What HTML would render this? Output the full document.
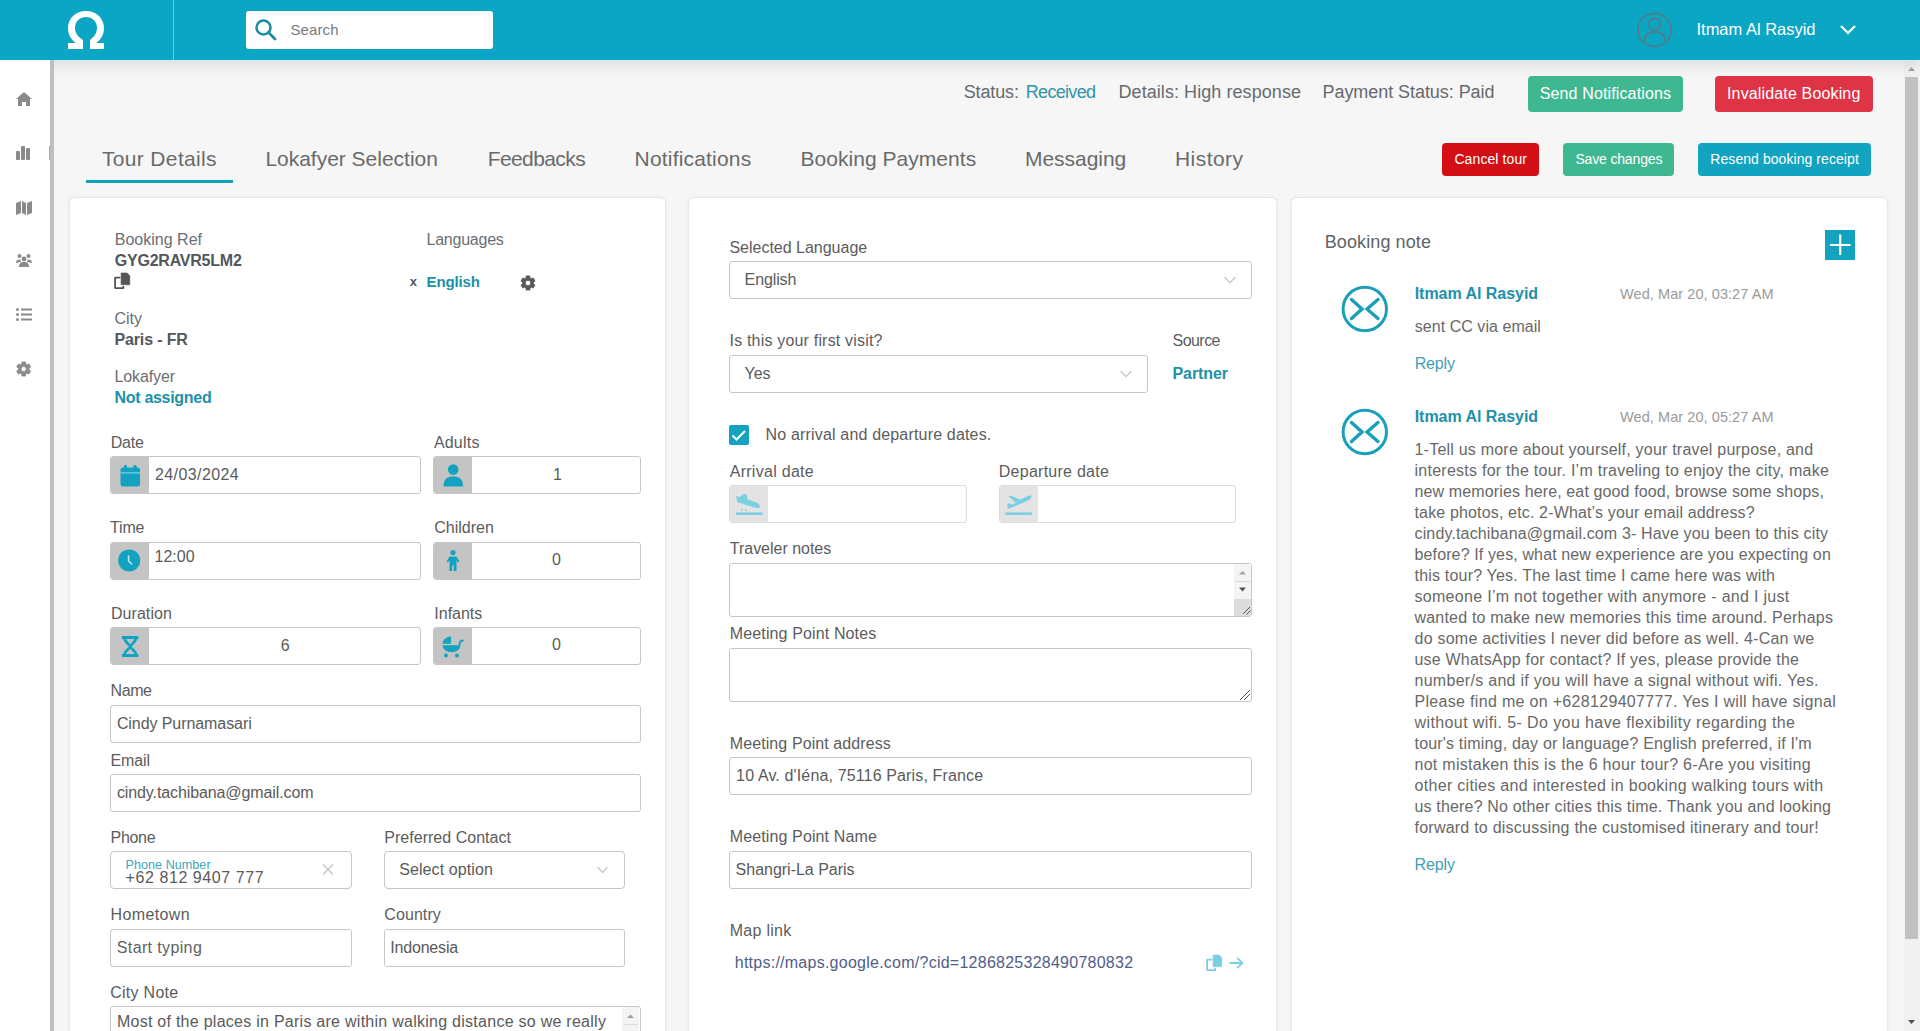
<!DOCTYPE html>
<html><head><meta charset="utf-8"><title>Booking</title>
<style>
*{box-sizing:border-box;margin:0;padding:0}
html,body{width:1920px;height:1031px;overflow:hidden}
body{font-family:"Liberation Sans",sans-serif;background:#f6f6f6;color:#555;position:relative}
.t{position:absolute;z-index:10;white-space:nowrap;font-family:"Liberation Sans",sans-serif}
.b{position:absolute}
svg{position:absolute;overflow:visible}
#hdr{left:0;top:0;width:1920px;height:60px;background:#0ba6c3;box-shadow:0 1px 0 #d2eff6,0 4px 14px rgba(0,0,0,.12);z-index:2}
.card{position:absolute;background:#fff;border:1px solid #e7e7e7;border-radius:6px;box-shadow:0 0 4px rgba(0,0,0,.05)}
.inp{position:absolute;background:#fff;border:1px solid #c6c6c6;border-radius:3px;overflow:hidden}
.addon{position:absolute;left:0;top:0;bottom:0;width:38px;background:#c4c4c4}
.btn{position:absolute;border-radius:4px}

</style></head><body>
<div class="b" id="hdr"></div>
<!-- omega logo -->
<svg style="left:0;top:0;z-index:3" width="200" height="60">
<path fill="#fff" d="M68,49 L68,43 L76,43 C70,39 68,33 68,28 C68,18 76,11 86,11 C96,11 104,18 104,28 C104,33 102,39 96,43 L104,43 L104,49 L90,49 L90,40 C94,37 97,33 97,28 C97,21 92,17 86,17 C80,17 75,21 75,28 C75,33 78,37 83,40 L83,49 Z"/>
<rect x="173" y="0" width="1" height="60" fill="#62d2ea"/>
</svg>
<!-- search -->
<div class="b" style="left:246px;top:11px;width:247px;height:38px;background:#fff;border-radius:3px;z-index:3"></div>
<svg style="left:0;top:0;z-index:4" width="300" height="60">
<circle cx="263.5" cy="27.5" r="7" fill="none" stroke="#1d8da5" stroke-width="2.6"/>
<line x1="268.6" y1="32.6" x2="275" y2="39" stroke="#1d8da5" stroke-width="2.8" stroke-linecap="round"/>
</svg>
<!-- user -->
<svg style="left:1600px;top:0;z-index:4" width="300" height="60">
<circle cx="54.6" cy="30" r="16.6" fill="none" stroke="#4f7e89" stroke-width="1.7"/>
<circle cx="54.8" cy="24.2" r="6" fill="none" stroke="#4f7e89" stroke-width="1.7"/>
<path d="M43.5,42.5 C44.5,35 49,31.8 54.8,31.8 C60.6,31.8 65,35 66,42.5" fill="none" stroke="#4f7e89" stroke-width="1.7"/>
<polyline points="241,26 248,33 255,26" fill="none" stroke="#fff" stroke-width="2.2"/>
</svg>
<!-- sidebar -->
<div class="b" style="left:0;top:60px;width:50px;height:971px;background:#fff;z-index:3"></div>
<div class="b" style="left:50px;top:60px;width:4px;height:971px;background:#bfbfbf;z-index:3"></div>
<div class="b" style="left:49px;top:146px;width:1px;height:14px;background:#b8a58a;z-index:4"></div>
<svg style="left:0;top:0;z-index:4" width="50" height="400" fill="#8a8a8a">
<!-- home -->
<path d="M24,92 L16,99 L18,99 L18,106 L22,106 L22,102 L26,102 L26,106 L30,106 L30,99 L32,99 Z"/>
<!-- chart -->
<rect x="16" y="151" width="4" height="9" rx="1"/><rect x="21" y="146" width="4" height="14" rx="1"/><rect x="26" y="148" width="4" height="12" rx="1"/>
<!-- map -->
<path d="M16,203 L21,201 L21,213 L16,215 Z M22,201 L26,203 L26,215 L22,213 Z M27,203 L32,201 L32,213 L27,215 Z"/>
<!-- users -->
<circle cx="19.5" cy="256" r="2"/><circle cx="28.5" cy="256" r="2"/><circle cx="24" cy="259" r="2.4"/>
<path d="M16,263 C16,260 18,259 20,259.5 L21,262 Z M32,263 C32,260 30,259 28,259.5 L27,262 Z"/>
<path d="M19,267 C19,263 21,262 24,262 C27,262 29,263 29,267 Z"/>
<!-- list -->
<circle cx="17.5" cy="309.5" r="1.5"/><circle cx="17.5" cy="314.5" r="1.5"/><circle cx="17.5" cy="319.5" r="1.5"/>
<rect x="21" y="308.5" width="11" height="2"/><rect x="21" y="313.5" width="11" height="2"/><rect x="21" y="318.5" width="11" height="2"/>
</svg>
<svg style="left:16px;top:361px;z-index:4" width="16" height="16" viewBox="0 0 16 16"><path fill="#8a8a8a" stroke="#8a8a8a" stroke-width="0.8" stroke-linejoin="round" fill-rule="evenodd" d="M5.05,3.41 L5.71,3.09 L5.93,0.92 L9.47,0.92 L9.69,3.09 L10.35,3.41 L10.96,3.82 L12.95,2.93 L14.72,5.99 L12.95,7.26 L13.00,8.00 L12.95,8.74 L14.72,10.01 L12.95,13.07 L10.96,12.18 L10.35,12.59 L9.69,12.91 L9.47,15.08 L5.93,15.08 L5.71,12.91 L5.05,12.59 L4.44,12.18 L2.45,13.07 L0.68,10.01 L2.45,8.74 L2.40,8.00 L2.45,7.26 L0.68,5.99 L2.45,2.93 L4.44,3.82 Z M10.30,8.00 A2.6,2.6 0 1 0 5.10,8.00 A2.6,2.6 0 1 0 10.30,8.00 Z"/></svg>
<!-- scrollbar -->
<div class="b" style="left:1904px;top:60px;width:16px;height:971px;background:#f1f1f1"></div>
<div class="b" style="left:1905px;top:77px;width:13px;height:862px;background:#c1c1c1"></div>
<svg style="left:1904px;top:60px" width="16" height="971">
<polygon points="4,11 11,11 7.5,7" fill="#a3a3a3"/>
<polygon points="4,960 11,960 7.5,964" fill="#505050"/>
</svg>
<!-- buttons -->
<div class="btn" style="left:1528px;top:76px;width:155px;height:36px;background:#3fb891"></div>
<div class="btn" style="left:1715px;top:76px;width:158px;height:36px;background:#df3346"></div>
<div class="btn" style="left:1442px;top:143px;width:97px;height:33px;background:#d30f15"></div>
<div class="btn" style="left:1563px;top:143px;width:111px;height:33px;background:#3fb891"></div>
<div class="btn" style="left:1698px;top:143px;width:173px;height:33px;background:#12a3c1"></div>
<!-- tab underline -->
<div class="b" style="left:86px;top:180px;width:147px;height:2.5px;background:#13a0bd"></div>
<!-- cards -->
<div class="card" style="left:69px;top:197px;width:597px;height:900px"></div>
<div class="card" style="left:688px;top:197px;width:589px;height:900px"></div>
<div class="card" style="left:1291px;top:197px;width:597px;height:900px"></div>
<!-- ===== card1 ===== -->
<!-- copy icon -->
<svg style="left:114px;top:273px" width="17" height="17" viewBox="0 0 17 17"><path d="M5.6,4.7 H1.1 V15.1 H9.3 V13.6" fill="none" stroke="#555" stroke-width="1.8" stroke-linejoin="round" stroke-linecap="round"/><path d="M7.1,0 H13.1 L15.8,2.7 V11.7 H7.1 Z" fill="#555" stroke="#555" stroke-width="0.6" stroke-linejoin="round"/></svg>
<!-- gear -->
<svg style="left:520px;top:275px" width="16" height="16" viewBox="0 0 16 16"><path fill="#585858" stroke="#585858" stroke-width="0.8" stroke-linejoin="round" fill-rule="evenodd" d="M5.30,3.32 L5.98,2.99 L6.23,0.92 L9.77,0.92 L10.02,2.99 L10.70,3.32 L11.32,3.74 L13.25,2.93 L15.02,5.99 L13.35,7.25 L13.40,8.00 L13.35,8.75 L15.02,10.01 L13.25,13.07 L11.32,12.26 L10.70,12.68 L10.02,13.01 L9.77,15.08 L6.23,15.08 L5.98,13.01 L5.30,12.68 L4.68,12.26 L2.75,13.07 L0.98,10.01 L2.65,8.75 L2.60,8.00 L2.65,7.25 L0.98,5.99 L2.75,2.93 L4.68,3.74 Z M10.70,8.00 A2.7,2.7 0 1 0 5.30,8.00 A2.7,2.7 0 1 0 10.70,8.00 Z"/></svg>
<!-- Date -->
<div class="inp" style="left:110px;top:456px;width:311px;height:38px"><div class="addon"></div></div>
<svg style="left:120px;top:465px" width="21" height="22" viewBox="0 0 21 22">
<rect x="0.5" y="2.5" width="19.5" height="19" rx="2.5" fill="#13a3c0"/>
<rect x="4" y="0" width="3" height="5" rx="1.2" fill="#13a3c0"/><rect x="13.5" y="0" width="3" height="5" rx="1.2" fill="#13a3c0"/>
<rect x="0.5" y="7.3" width="19.5" height="1.2" fill="#7fd3e3"/>
</svg>
<!-- Adults -->
<div class="inp" style="left:433px;top:456px;width:208px;height:38px"><div class="addon"></div></div>
<svg style="left:443px;top:464px" width="21" height="23" viewBox="0 0 21 23">
<circle cx="10.2" cy="5.6" r="5.3" fill="#13a3c0"/>
<path d="M0.5,22.5 C0.5,15 4,12.5 10.2,12.5 C16.5,12.5 20,15 20,22.5 Z" fill="#13a3c0"/>
</svg>
<!-- Time -->
<div class="inp" style="left:110px;top:542px;width:311px;height:38px"><div class="addon"></div></div>
<svg style="left:118px;top:549px" width="23" height="23" viewBox="0 0 23 23">
<circle cx="11.2" cy="11.4" r="11" fill="#13a3c0"/>
<path d="M10.6,7 V12 L13.6,15" fill="none" stroke="#bfe9f1" stroke-width="1.6" stroke-linecap="round"/>
</svg>
<!-- Children -->
<div class="inp" style="left:433px;top:542px;width:208px;height:38px"><div class="addon"></div></div>
<svg style="left:446px;top:549.5px" width="15" height="22" viewBox="0 0 15 22">
<circle cx="7" cy="2.6" r="2.6" fill="#13a3c0"/>
<path d="M3.5,6.5 H10.5 L13.5,11.5 L12,12.5 L10.5,10 V21 H7.8 V15.5 H6.2 V21 H3.5 V10 L2,12.5 L0.5,11.5 Z" fill="#13a3c0"/>
</svg>
<!-- Duration -->
<div class="inp" style="left:110px;top:627px;width:311px;height:38px"><div class="addon"></div></div>
<svg style="left:121.5px;top:636px" width="17" height="21" viewBox="0 0 17 21"><rect x="0" y="0" width="16.5" height="3" fill="#13a3c0"/><rect x="0" y="18" width="16.5" height="3" fill="#13a3c0"/><path d="M2.6,2 C2.6,7 8.2,8.3 8.2,10.5 C8.2,12.7 2.6,14 2.6,19 M13.9,2 C13.9,7 8.3,8.3 8.3,10.5 C8.3,12.7 13.9,14 13.9,19" fill="none" stroke="#13a3c0" stroke-width="2.8"/></svg>
<!-- Infants -->
<div class="inp" style="left:433px;top:627px;width:208px;height:38px"><div class="addon"></div></div>
<svg style="left:442px;top:636px" width="22" height="22" viewBox="0 0 22 22">
<path d="M0.5,9.2 A9,7 0 0 0 18.5,9.2 Z" fill="#13a3c0"/>
<path d="M0.5,7.8 A9,7.5 0 0 1 9,0.3 V7.8 Z" fill="#13a3c0"/>
<path d="M17.5,9 C17.5,6 18.5,4.5 21,4.5" fill="none" stroke="#13a3c0" stroke-width="1.8" stroke-linecap="round"/>
<circle cx="4" cy="19.5" r="2" fill="#13a3c0"/><circle cx="15" cy="19.5" r="2" fill="#13a3c0"/>
</svg>
<!-- Name / Email -->
<div class="inp" style="left:110px;top:705px;width:531px;height:38px"></div>
<div class="inp" style="left:110px;top:774px;width:531px;height:38px"></div>
<!-- Phone -->
<div class="inp" style="left:110px;top:851px;width:242px;height:38px;border-radius:4px"></div>
<svg style="left:322px;top:864px" width="12" height="11" viewBox="0 0 12 11">
<path d="M1,0.5 L11,10.5 M11,0.5 L1,10.5" stroke="#c9c9c9" stroke-width="1.6"/>
</svg>
<div class="inp" style="left:384px;top:851px;width:241px;height:38px;border-radius:4px"></div>
<svg style="left:597px;top:866px" width="11" height="8" viewBox="0 0 11 8">
<polyline points="0.5,1 5.5,6.5 10.5,1" fill="none" stroke="#c8c8c8" stroke-width="1.3"/>
</svg>
<div class="inp" style="left:110px;top:929px;width:242px;height:38px"></div>
<div class="inp" style="left:384px;top:929px;width:241px;height:38px"></div>
<!-- City note -->
<div class="inp" style="left:110px;top:1006px;width:531px;height:60px"></div>
<div class="b" style="left:622px;top:1007px;width:17px;height:30px;background:#f4f4f4"></div>
<svg style="left:622px;top:1007px" width="17" height="24">
<polygon points="5,11 12,11 8.5,7.5" fill="#a0a0a0"/>
<line x1="1" y1="17.5" x2="16" y2="17.5" stroke="#dedede" stroke-width="1"/>
</svg>
<!-- ===== card2 ===== -->
<div class="inp" style="left:729px;top:261px;width:523px;height:38px"></div>
<svg style="left:1224px;top:276px" width="12" height="8" viewBox="0 0 12 8">
<polyline points="0.5,1 6,6.5 11.5,1" fill="none" stroke="#c8c8c8" stroke-width="1.3"/>
</svg>
<div class="inp" style="left:729px;top:355px;width:419px;height:38px"></div>
<svg style="left:1120px;top:370px" width="12" height="8" viewBox="0 0 12 8">
<polyline points="0.5,1 6,6.5 11.5,1" fill="none" stroke="#c8c8c8" stroke-width="1.3"/>
</svg>
<div class="b" style="left:729px;top:425px;width:20px;height:20px;background:#13a3c0;border-radius:2px"></div>
<svg style="left:729px;top:425px" width="20" height="20">
<polyline points="3.5,10.5 7.5,14.5 16,6" fill="none" stroke="#fff" stroke-width="2"/>
</svg>
<!-- arrival / departure -->
<div class="inp" style="left:729px;top:485px;width:238px;height:38px;border-color:#dcdcdc"><div class="addon" style="background:#e3e3e3"></div></div>
<div class="inp" style="left:999px;top:485px;width:237px;height:38px;border-color:#dcdcdc"><div class="addon" style="background:#e3e3e3"></div></div>
<svg style="left:730px;top:486px" width="36" height="36" viewBox="0 0 36 36"><path d="M6,10 L9.5,11 L13.8,8 L16.8,8.6 L17.6,13.3 L26.5,16.6 C29.6,17.8 30.6,20.3 29.6,21.6 C28.8,22.6 26.8,22.3 24.5,21.6 L7.5,16.2 Z" fill="#7ccfe0"/><rect x="6" y="26.4" width="26.5" height="2.6" fill="#7ccfe0"/><circle cx="12" cy="23.6" r="0.9" fill="#7ccfe0"/><circle cx="15.8" cy="24" r="0.9" fill="#7ccfe0"/></svg>
<svg style="left:1000px;top:486px" width="36" height="36" viewBox="0 0 36 36"><path d="M7.3,18 L9,17.2 L12.5,18.6 L15.8,16.8 L8.5,10.3 L11.2,9.8 L20.3,13.6 L26.8,10.5 C29.8,9.2 31.8,9.3 31.6,10.6 C31.3,12.3 29.3,13.8 27,15 L9.3,22.6 C8.3,23 7.6,22.4 7.5,21.5 Z" fill="#7ccfe0"/><rect x="5.4" y="26.4" width="26.4" height="2.6" fill="#7ccfe0"/></svg>
<!-- textareas -->
<div class="inp" style="left:729px;top:563px;width:523px;height:54px"></div>
<div class="b" style="left:1234px;top:564px;width:17px;height:52px;background:#f4f4f4"></div>
<div class="b" style="left:1234px;top:599px;width:17px;height:17px;background:#dcdcdc"></div>
<svg style="left:1234px;top:564px" width="17" height="52">
<polygon points="5,10.5 12,10.5 8.5,7" fill="#a0a0a0"/>
<line x1="1" y1="17.5" x2="16" y2="17.5" stroke="#d8d8d8" stroke-width="1"/>
<polygon points="5,23.5 12,23.5 8.5,27.5" fill="#505050"/>
<path d="M9,50 L16,43 M12.5,50.5 L16.5,46.5" stroke="#555" stroke-width="1"/>
</svg>
<div class="inp" style="left:729px;top:648px;width:523px;height:54px"></div>
<svg style="left:1238px;top:688px" width="13" height="13">
<path d="M2,12 L12,2 M6,12 L12,6" stroke="#555" stroke-width="1"/>
</svg>
<div class="inp" style="left:729px;top:757px;width:523px;height:38px"></div>
<div class="inp" style="left:729px;top:851px;width:523px;height:38px"></div>
<!-- map link icons -->
<svg style="left:1206px;top:955px" width="17" height="17" viewBox="0 0 17 17"><path d="M5.6,4.7 H1.1 V15.1 H9.3 V13.6" fill="none" stroke="#7ccfe0" stroke-width="1.8" stroke-linejoin="round" stroke-linecap="round"/><path d="M7.1,0 H13.1 L15.8,2.7 V11.7 H7.1 Z" fill="#7ccfe0" stroke="#7ccfe0" stroke-width="0.6" stroke-linejoin="round"/></svg>
<svg style="left:1229px;top:957px" width="15" height="12" viewBox="0 0 15 12">
<path d="M0.5,6 H13.5 M8,0.8 L13.5,6 L8,11.2" fill="none" stroke="#7ccfe0" stroke-width="1.8"/>
</svg>
<!-- ===== card3 ===== -->
<div class="b" style="left:1825px;top:230px;width:30px;height:30px;background:#13a3c0"></div>
<svg style="left:1825px;top:230px" width="30" height="30">
<path d="M5,15 H25.5 M15.2,4.5 V25" stroke="#fff" stroke-width="2.2"/>
</svg>
<svg style="left:1340px;top:285px" width="50" height="50" viewBox="0 0 50 50">
<circle cx="24.8" cy="24" r="21.7" fill="none" stroke="#1a9fba" stroke-width="3"/>
<polyline points="11.5,14.5 22,24 11.5,33.5" fill="none" stroke="#1a9fba" stroke-width="3.4" stroke-linecap="round"/>
<polyline points="38,14.5 27,24 38,33.5" fill="none" stroke="#1a9fba" stroke-width="3.4" stroke-linecap="round"/>
</svg>
<svg style="left:1340px;top:408px" width="50" height="50" viewBox="0 0 50 50">
<circle cx="24.8" cy="24" r="21.7" fill="none" stroke="#1a9fba" stroke-width="3"/>
<polyline points="11.5,14.5 22,24 11.5,33.5" fill="none" stroke="#1a9fba" stroke-width="3.4" stroke-linecap="round"/>
<polyline points="38,14.5 27,24 38,33.5" fill="none" stroke="#1a9fba" stroke-width="3.4" stroke-linecap="round"/>
</svg>

<div class='t' id='t0' style='left:290.50px;top:22.00px;font-size:15px;line-height:15px;font-weight:400;color:#7a7a7a;letter-spacing:0.094px'>Search</div><div class='t' id='t1' style='left:1696.50px;top:21.00px;font-size:16.5px;line-height:16.5px;font-weight:400;color:#ffffff;letter-spacing:-0.015px'>Itmam Al Rasyid</div><div class='t' id='t2' style='left:963.70px;top:83.00px;font-size:18px;line-height:18px;font-weight:400;color:#666a6e;letter-spacing:-0.122px'>Status:</div><div class='t' id='t3' style='left:1025.80px;top:83.00px;font-size:18px;line-height:18px;font-weight:400;color:#3194ab;letter-spacing:-0.692px'>Received</div><div class='t' id='t4' style='left:1118.50px;top:83.00px;font-size:18px;line-height:18px;font-weight:400;color:#666a6e;letter-spacing:0.067px'>Details: High response</div><div class='t' id='t5' style='left:1322.50px;top:83.00px;font-size:18px;line-height:18px;font-weight:400;color:#666a6e;letter-spacing:-0.058px'>Payment Status: Paid</div><div class='t' id='t6' style='left:1539.70px;top:86.00px;font-size:16px;line-height:16px;font-weight:400;color:#fff;letter-spacing:0.137px'>Send Notifications</div><div class='t' id='t7' style='left:1727.00px;top:86.00px;font-size:16px;line-height:16px;font-weight:400;color:#fff;letter-spacing:0.149px'>Invalidate Booking</div><div class='t' id='t8' style='left:1454.40px;top:152.30px;font-size:14px;line-height:14px;font-weight:400;color:#fff;letter-spacing:0.101px'>Cancel tour</div><div class='t' id='t9' style='left:1575.40px;top:152.30px;font-size:14px;line-height:14px;font-weight:400;color:#fff;letter-spacing:-0.158px'>Save changes</div><div class='t' id='t10' style='left:1710.30px;top:152.30px;font-size:14px;line-height:14px;font-weight:400;color:#fff;letter-spacing:0.066px'>Resend booking receipt</div><div class='t' id='t11' style='left:102.00px;top:147.50px;font-size:21px;line-height:21px;font-weight:400;color:#6a6a6a;letter-spacing:0.337px'>Tour Details</div><div class='t' id='t12' style='left:265.40px;top:147.50px;font-size:21px;line-height:21px;font-weight:400;color:#6a6a6a;letter-spacing:-0.017px'>Lokafyer Selection</div><div class='t' id='t13' style='left:487.70px;top:147.50px;font-size:21px;line-height:21px;font-weight:400;color:#6a6a6a;letter-spacing:-0.592px'>Feedbacks</div><div class='t' id='t14' style='left:634.60px;top:147.50px;font-size:21px;line-height:21px;font-weight:400;color:#6a6a6a;letter-spacing:0.184px'>Notifications</div><div class='t' id='t15' style='left:800.50px;top:147.50px;font-size:21px;line-height:21px;font-weight:400;color:#6a6a6a;letter-spacing:0.039px'>Booking Payments</div><div class='t' id='t16' style='left:1025.00px;top:147.50px;font-size:21px;line-height:21px;font-weight:400;color:#6a6a6a;letter-spacing:-0.045px'>Messaging</div><div class='t' id='t17' style='left:1175.00px;top:147.50px;font-size:21px;line-height:21px;font-weight:400;color:#6a6a6a;letter-spacing:0.443px'>History</div><div class='t' id='t18' style='left:114.80px;top:232.00px;font-size:16px;line-height:16px;font-weight:400;color:#6b6e72;letter-spacing:0.003px'>Booking Ref</div><div class='t' id='t19' style='left:114.80px;top:253.00px;font-size:16px;line-height:16px;font-weight:700;color:#52575c;letter-spacing:-0.229px'>GYG2RAVR5LM2</div><div class='t' id='t20' style='left:426.50px;top:232.00px;font-size:16px;line-height:16px;font-weight:400;color:#6b6e72;letter-spacing:-0.236px'>Languages</div><div class='t' id='t21' style='left:426.50px;top:273.70px;font-size:15px;line-height:15px;font-weight:700;color:#2090a8;letter-spacing:-0.112px'>English</div><div class='t' id='t22' style='left:409.80px;top:275.30px;font-size:13px;line-height:13px;font-weight:700;color:#555;letter-spacing:1.066px'>x</div><div class='t' id='t23' style='left:114.50px;top:311.00px;font-size:16px;line-height:16px;font-weight:400;color:#6b6e72;letter-spacing:-0.054px'>City</div><div class='t' id='t24' style='left:114.50px;top:332.00px;font-size:16px;line-height:16px;font-weight:700;color:#52575c;letter-spacing:-0.143px'>Paris - FR</div><div class='t' id='t25' style='left:114.50px;top:369.00px;font-size:16px;line-height:16px;font-weight:400;color:#6b6e72;letter-spacing:-0.125px'>Lokafyer</div><div class='t' id='t26' style='left:114.50px;top:389.50px;font-size:16px;line-height:16px;font-weight:700;color:#2090a8;letter-spacing:-0.297px'>Not assigned</div><div class='t' id='t27' style='left:110.80px;top:435.00px;font-size:16px;line-height:16px;font-weight:400;color:#5c5c5c;letter-spacing:-0.266px'>Date</div><div class='t' id='t28' style='left:433.90px;top:434.80px;font-size:16px;line-height:16px;font-weight:400;color:#5c5c5c;letter-spacing:0.206px'>Adults</div><div class='t' id='t29' style='left:155.00px;top:467.00px;font-size:16px;line-height:16px;font-weight:400;color:#5a5a5a;letter-spacing:0.402px'>24/03/2024</div><div class='t' id='t30' style='left:553.00px;top:467.10px;font-size:16px;line-height:16px;font-weight:400;color:#5a5a5a;letter-spacing:0.000px'>1</div><div class='t' id='t31' style='left:110.00px;top:520.00px;font-size:16px;line-height:16px;font-weight:400;color:#5c5c5c;letter-spacing:-0.156px'>Time</div><div class='t' id='t32' style='left:434.30px;top:519.80px;font-size:16px;line-height:16px;font-weight:400;color:#5c5c5c;letter-spacing:-0.013px'>Children</div><div class='t' id='t33' style='left:154.60px;top:549.00px;font-size:16px;line-height:16px;font-weight:400;color:#5a5a5a;letter-spacing:-0.012px'>12:00</div><div class='t' id='t34' style='left:552.00px;top:552.40px;font-size:16px;line-height:16px;font-weight:400;color:#5a5a5a;letter-spacing:0.000px'>0</div><div class='t' id='t35' style='left:110.90px;top:606.00px;font-size:16px;line-height:16px;font-weight:400;color:#5c5c5c;letter-spacing:0.074px'>Duration</div><div class='t' id='t36' style='left:434.30px;top:605.70px;font-size:16px;line-height:16px;font-weight:400;color:#5c5c5c;letter-spacing:-0.005px'>Infants</div><div class='t' id='t37' style='left:280.70px;top:637.50px;font-size:16px;line-height:16px;font-weight:400;color:#5a5a5a;letter-spacing:0.000px'>6</div><div class='t' id='t38' style='left:552.00px;top:637.00px;font-size:16px;line-height:16px;font-weight:400;color:#5a5a5a;letter-spacing:0.000px'>0</div><div class='t' id='t39' style='left:110.50px;top:683.00px;font-size:16px;line-height:16px;font-weight:400;color:#5c5c5c;letter-spacing:-0.396px'>Name</div><div class='t' id='t40' style='left:116.90px;top:716.00px;font-size:16px;line-height:16px;font-weight:400;color:#5a5a5a;letter-spacing:-0.079px'>Cindy Purnamasari</div><div class='t' id='t41' style='left:110.50px;top:753.20px;font-size:16px;line-height:16px;font-weight:400;color:#5c5c5c;letter-spacing:-0.129px'>Email</div><div class='t' id='t42' style='left:116.90px;top:785.10px;font-size:16px;line-height:16px;font-weight:400;color:#5a5a5a;letter-spacing:-0.102px'>cindy.tachibana@gmail.com</div><div class='t' id='t43' style='left:110.60px;top:830.30px;font-size:16px;line-height:16px;font-weight:400;color:#5c5c5c;letter-spacing:-0.316px'>Phone</div><div class='t' id='t44' style='left:125.60px;top:859.00px;font-size:12.6px;line-height:12.6px;font-weight:400;color:#3fa6bb;letter-spacing:0.026px'>Phone Number</div><div class='t' id='t45' style='left:125.60px;top:870.00px;font-size:16px;line-height:16px;font-weight:400;color:#5a5a5a;letter-spacing:0.569px'>+62 812 9407 777</div><div class='t' id='t46' style='left:384.30px;top:830.30px;font-size:16px;line-height:16px;font-weight:400;color:#5c5c5c;letter-spacing:0.020px'>Preferred Contact</div><div class='t' id='t47' style='left:399.20px;top:862.10px;font-size:16px;line-height:16px;font-weight:400;color:#5a5a5a;letter-spacing:0.099px'>Select option</div><div class='t' id='t48' style='left:110.60px;top:907.10px;font-size:16px;line-height:16px;font-weight:400;color:#5c5c5c;letter-spacing:0.359px'>Hometown</div><div class='t' id='t49' style='left:116.80px;top:939.70px;font-size:16px;line-height:16px;font-weight:400;color:#5f5f5f;letter-spacing:0.369px'>Start typing</div><div class='t' id='t50' style='left:384.30px;top:907.00px;font-size:16px;line-height:16px;font-weight:400;color:#5c5c5c;letter-spacing:0.078px'>Country</div><div class='t' id='t51' style='left:390.20px;top:939.70px;font-size:16px;line-height:16px;font-weight:400;color:#5a5a5a;letter-spacing:-0.174px'>Indonesia</div><div class='t' id='t52' style='left:110.20px;top:984.70px;font-size:16px;line-height:16px;font-weight:400;color:#5c5c5c;letter-spacing:0.275px'>City Note</div><div class='t' id='t53' style='left:116.90px;top:1014.00px;font-size:16px;line-height:16px;font-weight:400;color:#5a5a5a;letter-spacing:0.264px'>Most of the places in Paris are within walking distance so we really</div><div class='t' id='t54' style='left:729.40px;top:240.00px;font-size:16px;line-height:16px;font-weight:400;color:#5c5c5c;letter-spacing:-0.007px'>Selected Language</div><div class='t' id='t55' style='left:744.60px;top:271.80px;font-size:16px;line-height:16px;font-weight:400;color:#5a5a5a;letter-spacing:-0.114px'>English</div><div class='t' id='t56' style='left:729.50px;top:332.70px;font-size:16px;line-height:16px;font-weight:400;color:#5c5c5c;letter-spacing:0.188px'>Is this your first visit?</div><div class='t' id='t57' style='left:744.50px;top:365.70px;font-size:16px;line-height:16px;font-weight:400;color:#5a5a5a;letter-spacing:0.000px'>Yes</div><div class='t' id='t58' style='left:1172.50px;top:333.00px;font-size:16px;line-height:16px;font-weight:400;color:#5c5c5c;letter-spacing:-0.541px'>Source</div><div class='t' id='t59' style='left:1172.50px;top:365.80px;font-size:16px;line-height:16px;font-weight:700;color:#2090a8;letter-spacing:-0.089px'>Partner</div><div class='t' id='t60' style='left:765.50px;top:427.00px;font-size:16px;line-height:16px;font-weight:400;color:#5c5c5c;letter-spacing:0.174px'>No arrival and departure dates.</div><div class='t' id='t61' style='left:729.70px;top:464.00px;font-size:16px;line-height:16px;font-weight:400;color:#5c5c5c;letter-spacing:0.280px'>Arrival date</div><div class='t' id='t62' style='left:998.80px;top:464.00px;font-size:16px;line-height:16px;font-weight:400;color:#5c5c5c;letter-spacing:0.251px'>Departure date</div><div class='t' id='t63' style='left:729.80px;top:540.70px;font-size:16px;line-height:16px;font-weight:400;color:#5c5c5c;letter-spacing:-0.021px'>Traveler notes</div><div class='t' id='t64' style='left:729.80px;top:626.40px;font-size:16px;line-height:16px;font-weight:400;color:#5c5c5c;letter-spacing:0.129px'>Meeting Point Notes</div><div class='t' id='t65' style='left:729.80px;top:736.30px;font-size:16px;line-height:16px;font-weight:400;color:#5c5c5c;letter-spacing:0.090px'>Meeting Point address</div><div class='t' id='t66' style='left:736.10px;top:767.70px;font-size:16px;line-height:16px;font-weight:400;color:#5a5a5a;letter-spacing:0.142px'>10 Av. d&#x27;Iéna, 75116 Paris, France</div><div class='t' id='t67' style='left:729.80px;top:828.70px;font-size:16px;line-height:16px;font-weight:400;color:#5c5c5c;letter-spacing:0.119px'>Meeting Point Name</div><div class='t' id='t68' style='left:735.60px;top:861.70px;font-size:16px;line-height:16px;font-weight:400;color:#5a5a5a;letter-spacing:-0.011px'>Shangri-La Paris</div><div class='t' id='t69' style='left:729.75px;top:923.00px;font-size:16px;line-height:16px;font-weight:400;color:#5c5c5c;letter-spacing:0.275px'>Map link</div><div class='t' id='t70' style='left:734.75px;top:954.80px;font-size:16px;line-height:16px;font-weight:400;color:#505d8a;letter-spacing:0.250px'>https://maps.google.com/?cid=1286825328490780832</div><div class='t' id='t71' style='left:1324.70px;top:233.00px;font-size:18px;line-height:18px;font-weight:400;color:#606366;letter-spacing:0.110px'>Booking note</div><div class='t' id='t72' style='left:1414.70px;top:286.10px;font-size:16px;line-height:16px;font-weight:700;color:#2090a8;letter-spacing:-0.035px'>Itmam Al Rasyid</div><div class='t' id='t73' style='left:1620.10px;top:287.00px;font-size:14.5px;line-height:14.5px;font-weight:400;color:#9a9a9a;letter-spacing:0.067px'>Wed, Mar 20, 03:27 AM</div><div class='t' id='t74' style='left:1414.70px;top:318.70px;font-size:16px;line-height:16px;font-weight:400;color:#686868;letter-spacing:0.052px'>sent CC via email</div><div class='t' id='t75' style='left:1414.70px;top:356.00px;font-size:16px;line-height:16px;font-weight:400;color:#3f9fb5;letter-spacing:-0.152px'>Reply</div><div class='t' id='t76' style='left:1414.70px;top:409.00px;font-size:16px;line-height:16px;font-weight:700;color:#2090a8;letter-spacing:-0.035px'>Itmam Al Rasyid</div><div class='t' id='t77' style='left:1620.10px;top:410.00px;font-size:14.5px;line-height:14.5px;font-weight:400;color:#9a9a9a;letter-spacing:0.067px'>Wed, Mar 20, 05:27 AM</div><div class='t' id='t78' style='left:1414.50px;top:441.80px;font-size:16px;line-height:16px;font-weight:400;color:#686868;letter-spacing:0.217px'>1-Tell us more about yourself, your travel purpose, and</div><div class='t' id='t79' style='left:1414.50px;top:462.80px;font-size:16px;line-height:16px;font-weight:400;color:#686868;letter-spacing:0.255px'>interests for the tour. I’m traveling to enjoy the city, make</div><div class='t' id='t80' style='left:1414.50px;top:483.80px;font-size:16px;line-height:16px;font-weight:400;color:#686868;letter-spacing:0.128px'>new memories here, eat good food, browse some shops,</div><div class='t' id='t81' style='left:1414.50px;top:504.80px;font-size:16px;line-height:16px;font-weight:400;color:#686868;letter-spacing:0.153px'>take photos, etc. 2-What’s your email address?</div><div class='t' id='t82' style='left:1414.50px;top:525.80px;font-size:16px;line-height:16px;font-weight:400;color:#686868;letter-spacing:0.148px'>cindy.tachibana@gmail.com 3- Have you been to this city</div><div class='t' id='t83' style='left:1414.50px;top:546.80px;font-size:16px;line-height:16px;font-weight:400;color:#686868;letter-spacing:0.130px'>before? If yes, what new experience are you expecting on</div><div class='t' id='t84' style='left:1414.50px;top:567.80px;font-size:16px;line-height:16px;font-weight:400;color:#686868;letter-spacing:0.194px'>this tour? Yes. The last time I came here was with</div><div class='t' id='t85' style='left:1414.50px;top:588.80px;font-size:16px;line-height:16px;font-weight:400;color:#686868;letter-spacing:0.298px'>someone I’m not together with anymore - and I just</div><div class='t' id='t86' style='left:1414.50px;top:609.80px;font-size:16px;line-height:16px;font-weight:400;color:#686868;letter-spacing:0.196px'>wanted to make new memories this time around. Perhaps</div><div class='t' id='t87' style='left:1414.50px;top:630.80px;font-size:16px;line-height:16px;font-weight:400;color:#686868;letter-spacing:0.236px'>do some activities I never did before as well. 4-Can we</div><div class='t' id='t88' style='left:1414.50px;top:651.80px;font-size:16px;line-height:16px;font-weight:400;color:#686868;letter-spacing:0.197px'>use WhatsApp for contact? If yes, please provide the</div><div class='t' id='t89' style='left:1414.50px;top:672.80px;font-size:16px;line-height:16px;font-weight:400;color:#686868;letter-spacing:0.288px'>number/s and if you will have a signal without wifi. Yes.</div><div class='t' id='t90' style='left:1414.50px;top:693.80px;font-size:16px;line-height:16px;font-weight:400;color:#686868;letter-spacing:0.315px'>Please find me on +628129407777. Yes I will have signal</div><div class='t' id='t91' style='left:1414.50px;top:714.80px;font-size:16px;line-height:16px;font-weight:400;color:#686868;letter-spacing:0.400px'>without wifi. 5- Do you have flexibility regarding the</div><div class='t' id='t92' style='left:1414.50px;top:735.80px;font-size:16px;line-height:16px;font-weight:400;color:#686868;letter-spacing:0.185px'>tour&#x27;s timing, day or language? English preferred, if I&#x27;m</div><div class='t' id='t93' style='left:1414.50px;top:756.80px;font-size:16px;line-height:16px;font-weight:400;color:#686868;letter-spacing:0.281px'>not mistaken this is the 6 hour tour? 6-Are you visiting</div><div class='t' id='t94' style='left:1414.50px;top:777.80px;font-size:16px;line-height:16px;font-weight:400;color:#686868;letter-spacing:0.310px'>other cities and interested in booking walking tours with</div><div class='t' id='t95' style='left:1414.50px;top:798.80px;font-size:16px;line-height:16px;font-weight:400;color:#686868;letter-spacing:0.166px'>us there? No other cities this time. Thank you and looking</div><div class='t' id='t96' style='left:1414.50px;top:819.80px;font-size:16px;line-height:16px;font-weight:400;color:#686868;letter-spacing:0.236px'>forward to discussing the customised itinerary and tour!</div><div class='t' id='t97' style='left:1414.50px;top:857.20px;font-size:16px;line-height:16px;font-weight:400;color:#3f9fb5;letter-spacing:-0.102px'>Reply</div>
</body></html>
